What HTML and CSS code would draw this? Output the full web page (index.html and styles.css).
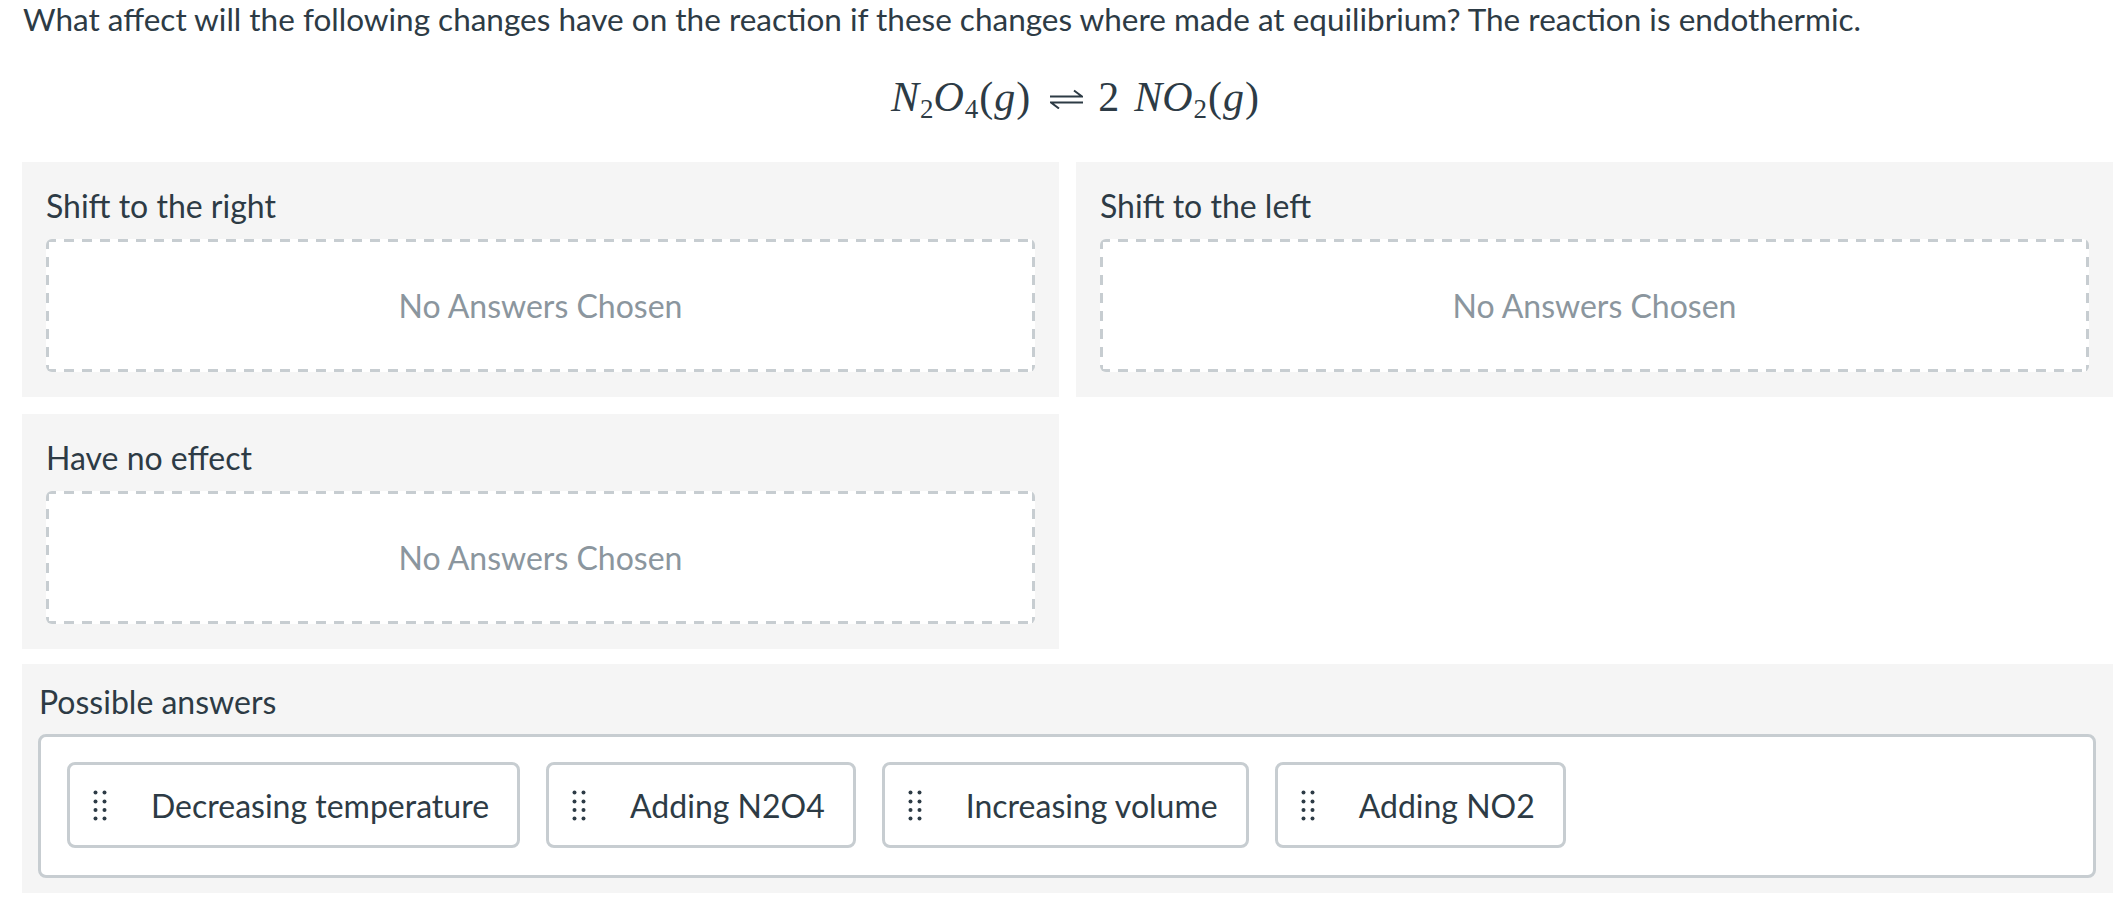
FILE: index.html
```html
<!DOCTYPE html>
<html lang="en">
<head>
    <meta charset="UTF-8">
    <meta name="viewport" content="width=device-width, initial-scale=1.0">
    <title>Categorization Question</title>
    <link rel="stylesheet" href="styles.css">
</head>
<body>
    <div class="question">
        <p class="question-text">What affect will the following changes have on the reaction if these changes where made at equilibrium? The reaction is endothermic.</p>

        <!-- Reaction -->
        <div class="equation">
            <span class="eq"><i>N</i><sub>2</sub><i>O</i><sub>4</sub><span class="paren">(</span><i>g</i><span class="paren">)</span><svg class="harpoons" width="33" height="20" viewBox="0 0 33 20"><path d="M0 7.5H32L24 1.5M33 13.5H1L9 19.5" fill="none" stroke="#2d3b45" stroke-width="2"/></svg><span class="coef">2</span><i>N</i><i>O</i><sub>2</sub><span class="paren">(</span><i>g</i><span class="paren">)</span></span>
        </div>

        <!-- Categories -->
        <div class="categories">
            <div class="category">
                <div class="category-title">Shift to the right</div>
                <div class="drop-zone">No Answers Chosen</div>
            </div>
            <div class="category">
                <div class="category-title">Shift to the left</div>
                <div class="drop-zone">No Answers Chosen</div>
            </div>
            <div class="category">
                <div class="category-title">Have no effect</div>
                <div class="drop-zone">No Answers Chosen</div>
            </div>
        </div>

        <!-- Answer bank -->
        <div class="answers">
            <div class="answers-title">Possible answers</div>
            <div class="answer-bank">
                <div class="answer">
                    <svg class="handle" width="14" height="31" viewBox="0 0 14 31"><g fill="#2d3b45"><circle cx="2.5" cy="2.5" r="2"/><circle cx="11.5" cy="2.5" r="2"/><circle cx="2.5" cy="11.5" r="2"/><circle cx="11.5" cy="11.5" r="2"/><circle cx="2.5" cy="20" r="2"/><circle cx="11.5" cy="20" r="2"/><circle cx="2.5" cy="28.5" r="2"/><circle cx="11.5" cy="28.5" r="2"/></g></svg>
                    <span>Decreasing temperature</span>
                </div>
                <div class="answer">
                    <svg class="handle" width="14" height="31" viewBox="0 0 14 31"><g fill="#2d3b45"><circle cx="2.5" cy="2.5" r="2"/><circle cx="11.5" cy="2.5" r="2"/><circle cx="2.5" cy="11.5" r="2"/><circle cx="11.5" cy="11.5" r="2"/><circle cx="2.5" cy="20" r="2"/><circle cx="11.5" cy="20" r="2"/><circle cx="2.5" cy="28.5" r="2"/><circle cx="11.5" cy="28.5" r="2"/></g></svg>
                    <span>Adding N2O4</span>
                </div>
                <div class="answer">
                    <svg class="handle" width="14" height="31" viewBox="0 0 14 31"><g fill="#2d3b45"><circle cx="2.5" cy="2.5" r="2"/><circle cx="11.5" cy="2.5" r="2"/><circle cx="2.5" cy="11.5" r="2"/><circle cx="11.5" cy="11.5" r="2"/><circle cx="2.5" cy="20" r="2"/><circle cx="11.5" cy="20" r="2"/><circle cx="2.5" cy="28.5" r="2"/><circle cx="11.5" cy="28.5" r="2"/></g></svg>
                    <span>Increasing volume</span>
                </div>
                <div class="answer">
                    <svg class="handle" width="14" height="31" viewBox="0 0 14 31"><g fill="#2d3b45"><circle cx="2.5" cy="2.5" r="2"/><circle cx="11.5" cy="2.5" r="2"/><circle cx="2.5" cy="11.5" r="2"/><circle cx="11.5" cy="11.5" r="2"/><circle cx="2.5" cy="20" r="2"/><circle cx="11.5" cy="20" r="2"/><circle cx="2.5" cy="28.5" r="2"/><circle cx="11.5" cy="28.5" r="2"/></g></svg>
                    <span>Adding NO2</span>
                </div>
            </div>
        </div>
    </div>
</body>
</html>
```

FILE: styles.css
```css
body {
    margin: 0;
    font-family: Lato, "Open Sans", sans-serif;
    color: #2d3b45;
    background: #fff;
}
.question {
    padding: 0 13px 0 22px;
}
.question-text {
    margin: 0;
    padding-left: 1px;
    font-size: 31.5px;
    line-height: 38px;
}
.equation {
    height: 50px;
    padding: 34px 0 40px 16px;
    text-align: center;
    font-family: "Liberation Serif", serif;
    font-size: 42px;
    line-height: 50px;
}
.eq i {
    font-style: italic;
}
.eq sub {
    font-size: 27px;
    line-height: 0;
    vertical-align: -7px;
    margin-left: 1px;
}
.paren {
    margin: 0 1px;
}
.harpoons {
    vertical-align: 2px;
    margin: 0 15px 0 19px;
}
.coef {
    margin-right: 15px;
}
.categories {
    display: grid;
    grid-template-columns: 1fr 1fr;
    column-gap: 17px;
    row-gap: 17px;
}
.category {
    background: #f5f5f5;
    padding: 25px 24px 25px;
}
.category-title {
    font-size: 32px;
    line-height: 38px;
    margin-bottom: 14px;
}
.drop-zone {
    height: 133px;
    border-radius: 6px;
    background:
        repeating-linear-gradient(90deg, #c7cdd1 0 10px, transparent 10px 18px) 0 0 / 100% 3px no-repeat,
        repeating-linear-gradient(90deg, #c7cdd1 0 10px, transparent 10px 18px) 0 100% / 100% 3px no-repeat,
        repeating-linear-gradient(180deg, #c7cdd1 0 10px, transparent 10px 18px) 0 0 / 3px 100% no-repeat,
        repeating-linear-gradient(180deg, #c7cdd1 0 10px, transparent 10px 18px) 100% 0 / 3px 100% no-repeat,
        #fff;
    display: flex;
    align-items: center;
    justify-content: center;
    color: #8b969e;
    font-size: 32px;
}
.answers {
    margin-top: 15px;
    background: #f5f5f5;
    padding: 19px 17px 15px 16px;
}
.answers-title {
    font-size: 32px;
    line-height: 38px;
    margin: 0 0 13px 1px;
}
.answer-bank {
    display: flex;
    gap: 26px;
    border: 3px solid #c7cdd1;
    border-radius: 8px;
    background: #fff;
    padding: 25px 25px 27px 26px;
}
.answer {
    display: flex;
    align-items: center;
    gap: 44px;
    height: 86px;
    box-sizing: border-box;
    border: 3px solid #c7cdd1;
    border-radius: 8px;
    padding: 0 28px 0 23px;
    font-size: 32px;
}
```
